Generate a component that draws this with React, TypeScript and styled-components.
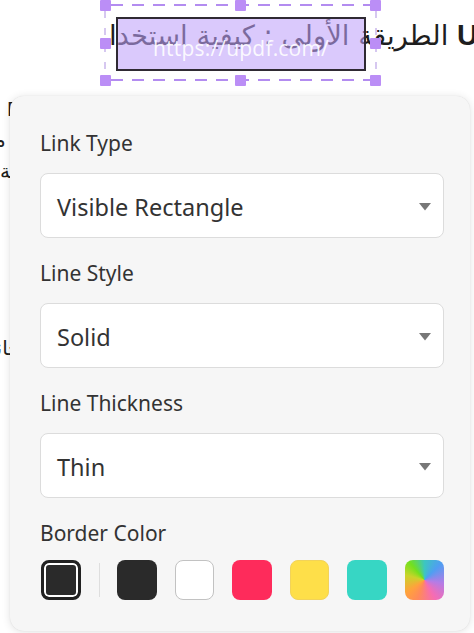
import * as React from "react"
import styled, { createGlobalStyle } from "styled-components"

const GlobalStyle = createGlobalStyle`
  html, body {
    margin: 0;
    padding: 0;
    background: #ffffff;
  }
  * {
    box-sizing: border-box;
  }
`

// Document underneath the popover
const Page = styled.div`
  position: relative;
  width: 474px;
  height: 633px;
  overflow: hidden;
  background: #ffffff;
`

const Document = styled.div`
  display: flex;
  flex-direction: column;
  width: 474px;
`

const HeadingRow = styled.div`
  position: relative;
  height: 64px;
  margin-right: -62px;
  padding-top: 3px;
  direction: rtl;
  white-space: nowrap;
  font-family: "DejaVu Sans", "Liberation Sans", sans-serif;
  font-size: 27.5px;
  line-height: 64px;
  color: #1e1e1e;

  b {
    font-family: "Liberation Sans", Arial, sans-serif;
    font-weight: 700;
    font-size: 29px;
  }
`

const DocLine = styled.div<{ $top: number }>`
  margin-top: ${(p) => p.$top}px;
  height: 31px;
  padding-right: 12px;
  line-height: 31px;
  direction: rtl;
  white-space: nowrap;
  overflow: hidden;
  font-family: "DejaVu Sans", "Liberation Sans", sans-serif;
  font-size: 20px;
  color: #1e1e1e;
`

// Link annotation selection
const Selection = styled.div`
  position: absolute;
  left: 100px;
  top: 0;
  width: 282px;
  height: 86px;
`

const Frame = styled.svg`
  position: absolute;
  left: 0;
  top: 0;
`

const Handle = styled.span<{ $x: number; $y: number }>`
  position: absolute;
  left: ${(p) => p.$x}px;
  top: ${(p) => p.$y}px;
  width: 11px;
  height: 11px;
  border-radius: 1px;
  background: #bb8ef6;
`

const LinkBox = styled.div`
  position: absolute;
  left: 16px;
  top: 17px;
  width: 250px;
  height: 54px;
  border: 2px solid #2f2a33;
  background: rgba(192, 162, 250, 0.58);
  display: flex;
  align-items: center;
  justify-content: center;
  padding-top: 8px;
`

const LinkUrl = styled.span`
  font-family: "Open Sans", "Noto Sans", sans-serif;
  font-size: 21px;
  color: rgba(255, 255, 255, 0.9);
  letter-spacing: 0.2px;
`

// Popover panel
const Panel = styled.div`
  position: absolute;
  left: 10px;
  top: 96px;
  width: 460px;
  height: 535px;
  padding: 32px 26px 0 30px;
  background: #f6f6f6;
  border-radius: 14px;
  box-shadow: 0 1px 8px rgba(0, 0, 0, 0.12), 0 0 1px rgba(0, 0, 0, 0.12);
  display: flex;
  flex-direction: column;
  font-family: "Noto Sans", "Open Sans", sans-serif;
  color: #333333;
`

const Field = styled.div`
  display: flex;
  flex-direction: column;
  margin-bottom: 20px;
`

const Label = styled.div<{ $gap?: number }>`
  height: 30px;
  line-height: 30px;
  font-size: 21px;
  color: #333333;
  margin-bottom: ${(p) => p.$gap ?? 15}px;
`

const Select = styled.div`
  height: 65px;
  display: flex;
  align-items: center;
  justify-content: space-between;
  padding: 2px 12px 0 16px;
  background: #ffffff;
  border: 1.5px solid #dcdcdc;
  border-radius: 8px;
  font-size: 23.5px;
  color: #333333;
`

const Swatches = styled.div`
  display: flex;
  align-items: center;
  gap: 18px;
  margin-top: -2px;
  padding-left: 1px;
`

const Swatch = styled.div<{ $color: string; $border?: string; $selected?: boolean }>`
  width: 40px;
  height: 40px;
  border-radius: 8px;
  background: ${(p) => p.$color};
  border: ${(p) => (p.$selected ? "3px solid #222222" : p.$border ? `1.5px solid ${p.$border}` : "none")};
  box-shadow: ${(p) => (p.$selected ? "inset 0 0 0 2px #ffffff" : "none")};
`

const Divider = styled.div`
  width: 1px;
  height: 34px;
  background: #dedede;
`

const Caret = () => (
  <svg width="12" height="8" viewBox="0 0 12 8">
    <polygon points="0,0 12,0 6,7.5" fill="#777777" />
  </svg>
)

const fields = [
  { label: "Link Type", value: "Visible Rectangle" },
  { label: "Line Style", value: "Solid" },
  { label: "Line Thickness", value: "Thin" },
]

const colors = [
  { color: "#2a2a2a" },
  { color: "#ffffff", border: "#c2c2c2" },
  { color: "#fe2b5b" },
  { color: "#fedf49", border: "#f2d35a" },
  { color: "#37d6c4" },
  {
    color:
      "conic-gradient(from 0deg, #3cc6c0, #509ef2 45deg, #b47ce6 100deg, #f66cb3 150deg, #ff8a5a 200deg, #ffa23c 235deg, #c9d42a 285deg, #72e01e 320deg, #3cc6c0 360deg)",
  },
]

const App: React.FC = () => {
  return (
    <Page>
      <GlobalStyle />
      <Document>
        <HeadingRow>
          <b>UPDF</b> الطريقة الأولى : كيفية استخدا
        </HeadingRow>
        <DocLine $top={30}>هناك العديد من الطرق لإضافة الروابط إلى ملفات PDF الخاصة بك</DocLine>
        <DocLine $top={0}>
          <b>A</b> يمكنك استخدام أداة الروابط في UPDF لإنشاء رابط مرئي
        </DocLine>
        <DocLine $top={0}>تحديد المنطقة ثم اختيار نوع الرابط المناسب لك بسهولة تامة</DocLine>
        <DocLine $top={146}>الخطوة التالية هي تعديل خصائص الرابط من اللوحة الجانبية</DocLine>
        <DocLine $top={82}>يمكنك تغيير لون الحدود وسمك الخط ونمطه بسهولة</DocLine>
        <DocLine $top={47}>بعد ذلك، احفظ الملف ،</DocLine>
      </Document>

      <Selection>
        <Frame width="282" height="86" viewBox="0 0 282 86">
          <line x1="11" y1="5" x2="271" y2="5" stroke="#b38cf0" strokeWidth="2" strokeDasharray="12 9" />
          <line x1="11" y1="80" x2="271" y2="80" stroke="#b38cf0" strokeWidth="2" strokeDasharray="12 9" />
          <line x1="5" y1="11" x2="5" y2="75" stroke="#c9b6ec" strokeWidth="1.5" strokeDasharray="7 10" />
          <line x1="276" y1="11" x2="276" y2="75" stroke="#c9b6ec" strokeWidth="1.5" strokeDasharray="7 10" />
        </Frame>
        <LinkBox>
          <LinkUrl>https://updf.com/</LinkUrl>
        </LinkBox>
        <Handle $x={0} $y={0} />
        <Handle $x={135} $y={0} />
        <Handle $x={270} $y={0} />
        <Handle $x={0} $y={38} />
        <Handle $x={270} $y={38} />
        <Handle $x={0} $y={75} />
        <Handle $x={135} $y={75} />
        <Handle $x={270} $y={75} />
      </Selection>

      <Panel>
        {fields.map((f) => (
          <Field key={f.label}>
            <Label>{f.label}</Label>
            <Select>
              <span>{f.value}</span>
              <Caret />
            </Select>
          </Field>
        ))}
        <Label $gap={14}>Border Color</Label>
        <Swatches>
          <Swatch $color="#2a2a2a" $selected />
          <Divider />
          {colors.map((c, i) => (
            <Swatch key={i} $color={c.color} $border={c.border} />
          ))}
        </Swatches>
      </Panel>
    </Page>
  )
}

export default App
